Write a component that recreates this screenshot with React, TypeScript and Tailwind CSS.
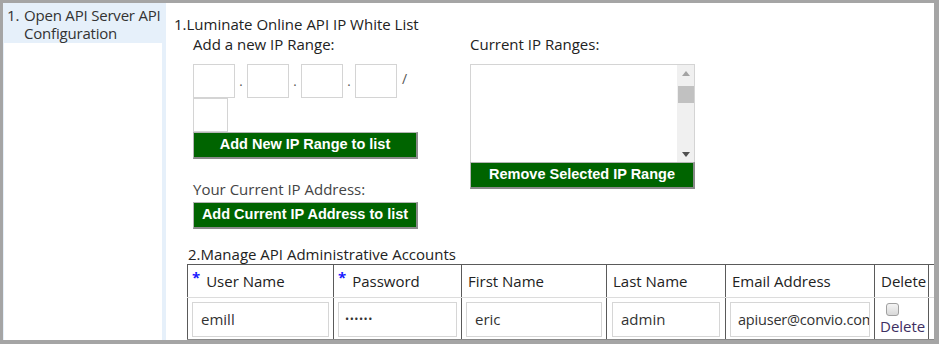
import React from "react";

const font = { fontFamily: '"Open Sans", "Noto Sans", sans-serif' };
const btnFont = { fontFamily: '"Liberation Sans", Arial, sans-serif' };

function IpBox({ w = 42 }: { w?: number }) {
  return <div className="h-[34px] border border-[#d4d4d4] bg-white" style={{ width: w }} />;
}

function GreenButton({ label }: { label: string }) {
  return (
    <div
      className="w-[225px] h-[27px] bg-[#006400] border-t border-l border-[#b5b5b5] border-r-2 border-b-2 border-r-[#8a8a8a] border-b-[#8a8a8a] flex items-center justify-center text-white font-bold text-[14.5px]"
      style={btnFont}
    >
      {label}
    </div>
  );
}

function Cell({ w, children, last }: { w: number; children?: React.ReactNode; last?: boolean }) {
  return (
    <div
      className={"shrink-0 border-l border-[#5a5a5a] " + (last ? "border-r" : "")}
      style={{ width: w }}
    >
      {children}
    </div>
  );
}

function TextInput({ w, value, small }: { w: number; value: string; small?: boolean }) {
  return (
    <div
      className={
        "h-[35px] border border-[#d6d6d6] bg-white flex items-center text-[#333] overflow-hidden whitespace-nowrap " +
        (small ? "pl-[6px] text-[11px] tracking-[0.5px]" : "pl-[8px] text-[15px]")
      }
      style={{ width: w }}
    >
      {value}
    </div>
  );
}

export default function App() {
  const cols = [146, 128, 145, 119, 149, 55];
  const heads = ["User Name", "Password", "First Name", "Last Name", "Email Address", "Delete"];
  return (
    <div
      className="w-[939px] h-[344px] bg-[#a5a5a5] pt-[3px] pl-[3px] pr-[5px] pb-[4px] overflow-hidden"
      style={font}
    >
      <div className="flex h-full bg-white overflow-hidden">
        {/* Sidebar */}
        <div className="w-[163px] shrink-0 bg-[#e6f0fa] flex flex-col">
          <div className="h-[40px] flex pl-[4px] pt-[3px] text-[15px] leading-[18px] text-[#333]">
            <span className="w-[17px] shrink-0">1.</span>
            <span className="tracking-[-0.2px]">Open API Server API Configuration</span>
          </div>
          <div className="flex-1 ml-[1px] mr-[4px] bg-white" />
        </div>
        {/* Main */}
        <div className="flex-1 pl-[8px] pt-[11px] text-[#222]">
          <div className="text-[15px] leading-[20px] text-[#222]">1.Luminate Online API IP White List</div>
          <div className="flex pl-[19px]">
            <div className="w-[277px] shrink-0">
              <div className="text-[15px] leading-[20px] text-[#222]">Add a new IP Range:</div>
              <div className="mt-[10px] flex items-start">
                <IpBox />
                <span className="w-[12px] text-center text-[13px] leading-[34px] text-[#555]">.</span>
                <IpBox />
                <span className="w-[12px] text-center text-[13px] leading-[34px] text-[#555]">.</span>
                <IpBox />
                <span className="w-[12px] text-center text-[13px] leading-[34px] text-[#555]">.</span>
                <IpBox />
                <span className="pl-[5px] text-[14px] leading-[30px] text-[#555]">/</span>
              </div>
              <div className="flex">
                <IpBox w={35} />
              </div>
              <GreenButton label="Add New IP Range to list" />
              <div className="mt-[20px] text-[15px] leading-[20px] text-[#444]">Your Current IP Address:</div>
              <div className="mt-[3px]">
                <GreenButton label="Add Current IP Address to list" />
              </div>
            </div>
            <div className="w-[225px] shrink-0">
              <div className="text-[15px] leading-[20px] text-[#222]">Current IP Ranges:</div>
              <div className="mt-[10px] h-[98px] border border-[#d4d4d4] border-b-0 flex bg-white">
                <div className="flex-1" />
                <div className="w-[17px] bg-[#f0f0f0] flex flex-col items-center">
                  <div className="h-[16px] flex items-center justify-center">
                    <svg width="8" height="5" viewBox="0 0 8 5"><path d="M0 5 L4 0 L8 5 Z" fill="#a3a3a3" /></svg>
                  </div>
                  <div className="w-[16px] h-[17px] bg-[#c1c1c1] mt-[5px]" />
                  <div className="flex-1" />
                  <div className="h-[16px] flex items-center justify-center">
                    <svg width="8" height="5" viewBox="0 0 8 5"><path d="M0 0 L8 0 L4 5 Z" fill="#505050" /></svg>
                  </div>
                </div>
              </div>
              <GreenButton label="Remove Selected IP Range" />
            </div>
          </div>
          <div className="mt-[15px] text-[15px] leading-[20px] text-[#222] pl-[14px]">2.Manage API Administrative Accounts</div>
          <div className="ml-[13px] border-t border-[#5a5a5a]">
            <div className="flex h-[32px]">
              {heads.map((h, i) => (
                <Cell key={h} w={cols[i]} last={i === 5}>
                  <div className="flex items-center h-full pl-[4px] text-[15px] text-[#222]">
                    {i < 2 && <span className="text-[#1a1aff] text-[15px] font-bold mr-[6px] -mt-[8px]">*</span>}
                    <span className={i < 2 ? "" : "pl-[2px]"}>{h}</span>
                  </div>
                </Cell>
              ))}
            </div>
            <div className="flex h-[43px] border-t border-[#dcdcdc] border-b border-b-[#8a8a8a]">
              <Cell w={cols[0]}>
                <div className="pl-[4px] pt-[4px]"><TextInput w={137} value="emill" /></div>
              </Cell>
              <Cell w={cols[1]}>
                <div className="pl-[4px] pt-[4px]"><TextInput w={119} value="••••••" small /></div>
              </Cell>
              <Cell w={cols[2]}>
                <div className="pl-[4px] pt-[4px]"><TextInput w={136} value="eric" /></div>
              </Cell>
              <Cell w={cols[3]}>
                <div className="pl-[5px] pt-[4px]"><TextInput w={108} value="admin" /></div>
              </Cell>
              <Cell w={cols[4]}>
                <div className="pl-[4px] pt-[4px]">
                  <div className="w-[140px] h-[35px] border border-[#d6d6d6] bg-white flex items-center pl-[7px] text-[14.5px] text-[#333] overflow-hidden whitespace-nowrap tracking-[-0.2px]">
                    apiuser@convio.com
                  </div>
                </div>
              </Cell>
              <Cell w={cols[5]} last>
                <div className="flex flex-col pl-[5px] pt-[5px]">
                  <div className="ml-[6px] w-[13px] h-[13px] rounded-[3px] border border-[#a0a0a0] bg-gradient-to-b from-[#f4f4f4] to-[#d8d8d8]" />
                  <div className="text-[15px] leading-[18px] mt-[1px] text-[#3e2f62]">Delete</div>
                </div>
              </Cell>
            </div>
            <div className="flex h-[10px]">
              {cols.map((c, i) => (
                <Cell key={i} w={c} last={i === 5} />
              ))}
            </div>
          </div>
        </div>
      </div>
    </div>
  );
}
